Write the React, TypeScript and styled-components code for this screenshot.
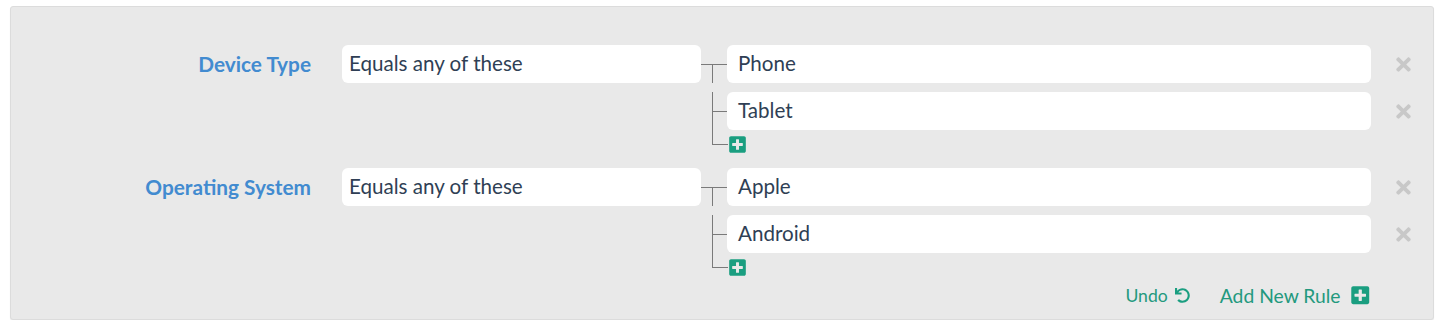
import React from "react";
import styled, { createGlobalStyle } from "styled-components";
import { FaTimes, FaPlusSquare, FaUndo } from "react-icons/fa";

const Global = createGlobalStyle`
  html, body { margin: 0; padding: 0; background: #fff; }
  body { font-family: Lato, "Open Sans", sans-serif; }
`;

const Panel = styled.div`
  margin: 6px 7px 0 10px;
  height: 314px;
  box-sizing: border-box;
  background: #e9e9e9;
  border: 1px solid #dcdcdc;
  border-radius: 3px;
  box-shadow: 0 1px 1px rgba(0,0,0,0.08);
  padding: 38px 0 0 0;
  display: flex;
  flex-direction: column;
`;

const Rule = styled.div`
  display: flex;
  align-items: flex-start;
  margin-bottom: 15px;
`;

const Label = styled.div`
  width: 300px;
  margin-right: 31px;
  height: 38px;
  padding-bottom: 1px;
  box-sizing: border-box;
  display: flex;
  align-items: center;
  justify-content: flex-end;
  color: #428bd0;
  font-weight: 700;
  font-size: 20.8px;
`;

const Box = styled.div<{ $pad: number }>`
  box-sizing: border-box;
  height: 38px;
  background: #fff;
  border-radius: 6px;
  display: flex;
  align-items: center;
  padding-left: ${(p) => p.$pad}px;
  padding-bottom: 2px;
  color: #2f3f55;
  font-size: 20.6px;
`;

const Operator = styled(Box)`
  width: 359px;
`;

const Values = styled.div`
  flex: 1;
  display: flex;
  flex-direction: column;
`;

const ValueRow = styled.div<{ $last?: boolean }>`
  display: flex;
  padding-bottom: ${(p) => (p.$last ? 0 : 9)}px;
`;

type Kind = "first" | "middle" | "add";

const Connector = styled.div<{ $kind: Kind }>`
  position: relative;
  width: 26px;
  flex: none;
  &::before {
    content: "";
    position: absolute;
    left: 11px;
    width: 1px;
    background: #7a7a7a;
    top: ${(p) => (p.$kind === "first" ? "19px" : "0")};
    bottom: ${(p) => (p.$kind === "add" ? "auto" : "0")};
    height: ${(p) => (p.$kind === "add" ? "15px" : "auto")};
  }
  &::after {
    content: "";
    position: absolute;
    left: ${(p) => (p.$kind === "first" ? "0" : "11px")};
    right: ${(p) => (p.$kind === "add" ? "-1px" : "0")};
    top: ${(p) => (p.$kind === "add" ? "14px" : "19px")};
    height: 1px;
    background: #7a7a7a;
  }
`;

const Value = styled(Box)`
  flex: 1;
`;

const Remove = styled.button`
  width: 62px;
  flex: none;
  border: 0;
  background: transparent;
  padding: 0 0 0 22px;
  display: flex;
  align-items: center;
  justify-content: flex-start;
  color: #c8c8c8;
  cursor: pointer;
`;

const AddRow = styled.div`
  display: flex;
  height: 23px;
`;

const AddValue = styled.button`
  border: 0;
  background: transparent;
  padding: 0;
  margin: 5px 0 0 1px;
  height: 19px;
  color: #1a9e80;
  line-height: 0;
  display: flex;
  align-items: center;
  cursor: pointer;
`;

const Footer = styled.div`
  display: flex;
  justify-content: flex-end;
  align-items: center;
  padding-right: 63px;
  margin-top: -7px;
`;

const Action = styled.button<{ $size: number; $gap: number; $space?: number }>`
  border: 0;
  background: transparent;
  padding: 0;
  margin-left: ${(p) => p.$space ?? 0}px;
  display: flex;
  align-items: center;
  gap: ${(p) => p.$gap}px;
  color: #23997e;
  font-family: Lato, sans-serif;
  font-size: ${(p) => p.$size}px;
  cursor: pointer;
  svg { color: #1a9e80; }
`;

const rules = [
  { label: "Device Type", values: ["Phone", "Tablet"] },
  { label: "Operating System", values: ["Apple", "Android"] },
];

export default function App() {
  return (
    <>
      <Global />
      <Panel>
        {rules.map((r) => (
          <Rule key={r.label}>
            <Label>{r.label}</Label>
            <Operator $pad={7}>Equals any of these</Operator>
            <Values>
              {r.values.map((v, i) => (
                <ValueRow key={v} $last={i === r.values.length - 1}>
                  <Connector $kind={i === 0 ? "first" : "middle"} />
                  <Value $pad={11}>{v}</Value>
                  <Remove aria-label="remove">
                    <FaTimes size={21} />
                  </Remove>
                </ValueRow>
              ))}
              <AddRow>
                <Connector $kind="add" />
                <AddValue aria-label="add value">
                  <FaPlusSquare size={19} />
                </AddValue>
              </AddRow>
            </Values>
          </Rule>
        ))}
        <Footer>
          <Action $size={17.6} $gap={7}>
            Undo <FaUndo size={15} />
          </Action>
          <Action $size={19.3} $gap={9} $space={30}>
            Add New Rule <FaPlusSquare size={20.5} />
          </Action>
        </Footer>
      </Panel>
    </>
  );
}
